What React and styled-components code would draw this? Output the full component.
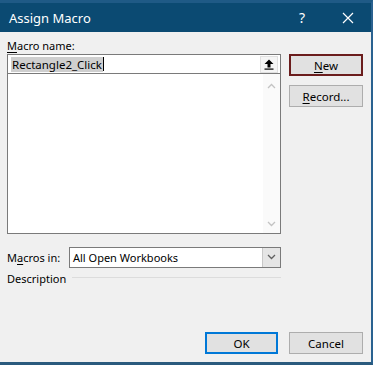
import React from "react";
import styled, { createGlobalStyle } from "styled-components";

const GlobalStyle = createGlobalStyle`
  html, body {
    margin: 0;
    padding: 0;
    background: #f0f0f0;
  }
  body {
    font-family: "Noto Sans", "Open Sans", sans-serif;
    font-size: 11px;
    color: #000;
  }
`;

const Window = styled.div`
  width: 373px;
  height: 365px;
  box-sizing: border-box;
  display: flex;
  flex-direction: column;
  background: #f0f0f0;
  border-top: 3px solid #1f5a86;
  border-right: 2px solid #2a6290;
  border-bottom: 3px solid #2a5a7d;
`;

const TitleBar = styled.div`
  height: 29px;
  flex: none;
  display: flex;
  align-items: center;
  background: #0b4a72;
  color: #fff;
  padding-left: 9px;
  font-size: 13px;
`;

const Title = styled.div`
  flex: 1;
`;

const TitleButton = styled.div`
  width: ${(p) => p.$w}px;
  display: flex;
  justify-content: center;
  align-items: center;
  font-size: 14px;
`;

const Body = styled.div`
  flex: 1;
  display: flex;
  flex-direction: column;
  padding: 2px 8px 8px 7px;
`;

const Top = styled.div`
  display: flex;
  gap: 8px;
`;

const LeftCol = styled.div`
  width: 274px;
  display: flex;
  flex-direction: column;
`;

const RightCol = styled.div`
  width: 74px;
  padding-top: 20px;
  display: flex;
  flex-direction: column;
  gap: 9px;
`;

const Label = styled.div`
  height: 20px;
  box-sizing: border-box;
  padding-top: 4px;
  line-height: 16px;
`;

const U = styled.span`
  text-decoration: underline;
  text-underline-offset: 2px;
`;

const NameField = styled.div`
  height: 19px;
  box-sizing: border-box;
  border: 1px solid #7a7a7a;
  border-bottom: none;
  background: #fff;
  display: flex;
  align-items: center;
  padding-left: 3px;
  font-size: 11.5px;
`;

const Selected = styled.span`
  background: #cfcfcf;
  padding: 0 1px;
  line-height: 15px;
`;

const Caret = styled.span`
  width: 1px;
  height: 14px;
  background: #000;
`;

const UpBtn = styled.div`
  margin-left: auto;
  width: 16px;
  height: 15px;
  margin-right: 2px;
  display: flex;
  align-items: center;
  justify-content: center;
  background: #f5f5f5;
  border: 1px solid #e0e0e0;
`;

const ListBox = styled.div`
  height: 161px;
  box-sizing: border-box;
  border: 1px solid #7a7a7a;
  background: #fff;
  display: flex;
  justify-content: flex-end;
`;

const ScrollBar = styled.div`
  width: 17px;
  display: flex;
  flex-direction: column;
  justify-content: space-between;
  align-items: center;
  padding: 9px 0 6px;
  background: #fafafa;
`;

const Button = styled.div`
  height: 22px;
  box-sizing: border-box;
  display: flex;
  align-items: center;
  justify-content: center;
  background: #e1e1e1;
  border: ${(p) => (p.$focus ? `2px solid ${p.$focus}` : "1px solid #adadad")};
  width: ${(p) => p.$w || 74}px;
  font-size: 11.5px;
`;

const MacrosRow = styled.div`
  display: flex;
  align-items: center;
  margin-top: 12px;
  height: 22px;
`;

const MacrosLabel = styled.div`
  width: 62px;
`;

const Select = styled.div`
  width: 212px;
  height: 21px;
  box-sizing: border-box;
  border: 1px solid #7a7a7a;
  background: #fff;
  display: flex;
  align-items: center;
  padding-left: 3px;
`;

const SelectArrow = styled.div`
  margin-left: auto;
  width: 18px;
  height: 19px;
  box-sizing: border-box;
  background: #e5e5e5;
  border-left: 1px solid #c8c8c8;
  display: flex;
  align-items: center;
  justify-content: center;
`;

const DescRow = styled.div`
  display: flex;
  align-items: center;
  gap: 6px;
  width: 274px;
  height: 20px;
`;

const Rule = styled.div`
  flex: 1;
  height: 1px;
  margin-top: -2px;
  background: #dcdcdc;
`;

const Footer = styled.div`
  margin-top: auto;
  display: flex;
  justify-content: flex-end;
  gap: 11px;
`;

const Chevron = ({ up, color = "#c3c3c3" }) => (
  <svg width="9" height="6" viewBox="0 0 9 6">
    <path
      d={up ? "M1 5 L4.5 1.5 L8 5" : "M1 1 L4.5 4.5 L8 1"}
      fill="none"
      stroke={color}
      strokeWidth="1.3"
    />
  </svg>
);

export default function App() {
  return (
    <>
      <GlobalStyle />
      <Window>
        <TitleBar>
          <Title>Assign Macro</Title>
          <TitleButton $w={46}>?</TitleButton>
          <TitleButton $w={46}>
            <svg width="12" height="12" viewBox="0 0 12 12">
              <path d="M1 1 L11 11 M11 1 L1 11" stroke="#fff" strokeWidth="1.2" />
            </svg>
          </TitleButton>
        </TitleBar>
        <Body>
          <Top>
            <LeftCol>
              <Label>
                <U>M</U>acro name:
              </Label>
              <NameField>
                <Selected>Rectangle2_Click</Selected>
                <Caret />
                <UpBtn>
                  <svg width="10" height="11" viewBox="0 0 10 11">
                    <path d="M5 0.5 L9.5 5 L6.5 5 L6.5 8.5 L3.5 8.5 L3.5 5 L0.5 5 Z" fill="#000" />
                    <rect x="0.5" y="9.5" width="9" height="1.2" fill="#000" />
                  </svg>
                </UpBtn>
              </NameField>
              <ListBox>
                <ScrollBar>
                  <Chevron up />
                  <Chevron />
                </ScrollBar>
              </ListBox>
            </LeftCol>
            <RightCol>
              <Button $focus="#6b1d1d">
                <U>N</U>ew
              </Button>
              <Button>
                <U>R</U>ecord...
              </Button>
            </RightCol>
          </Top>
          <MacrosRow>
            <MacrosLabel>
              M<U>a</U>cros in:
            </MacrosLabel>
            <Select>
              All Open Workbooks
              <SelectArrow>
                <Chevron color="#606060" />
              </SelectArrow>
            </Select>
          </MacrosRow>
          <DescRow>
            Description
            <Rule />
          </DescRow>
          <Footer>
            <Button $focus="#0078d7" $w={73}>OK</Button>
            <Button>Cancel</Button>
          </Footer>
        </Body>
      </Window>
    </>
  );
}
